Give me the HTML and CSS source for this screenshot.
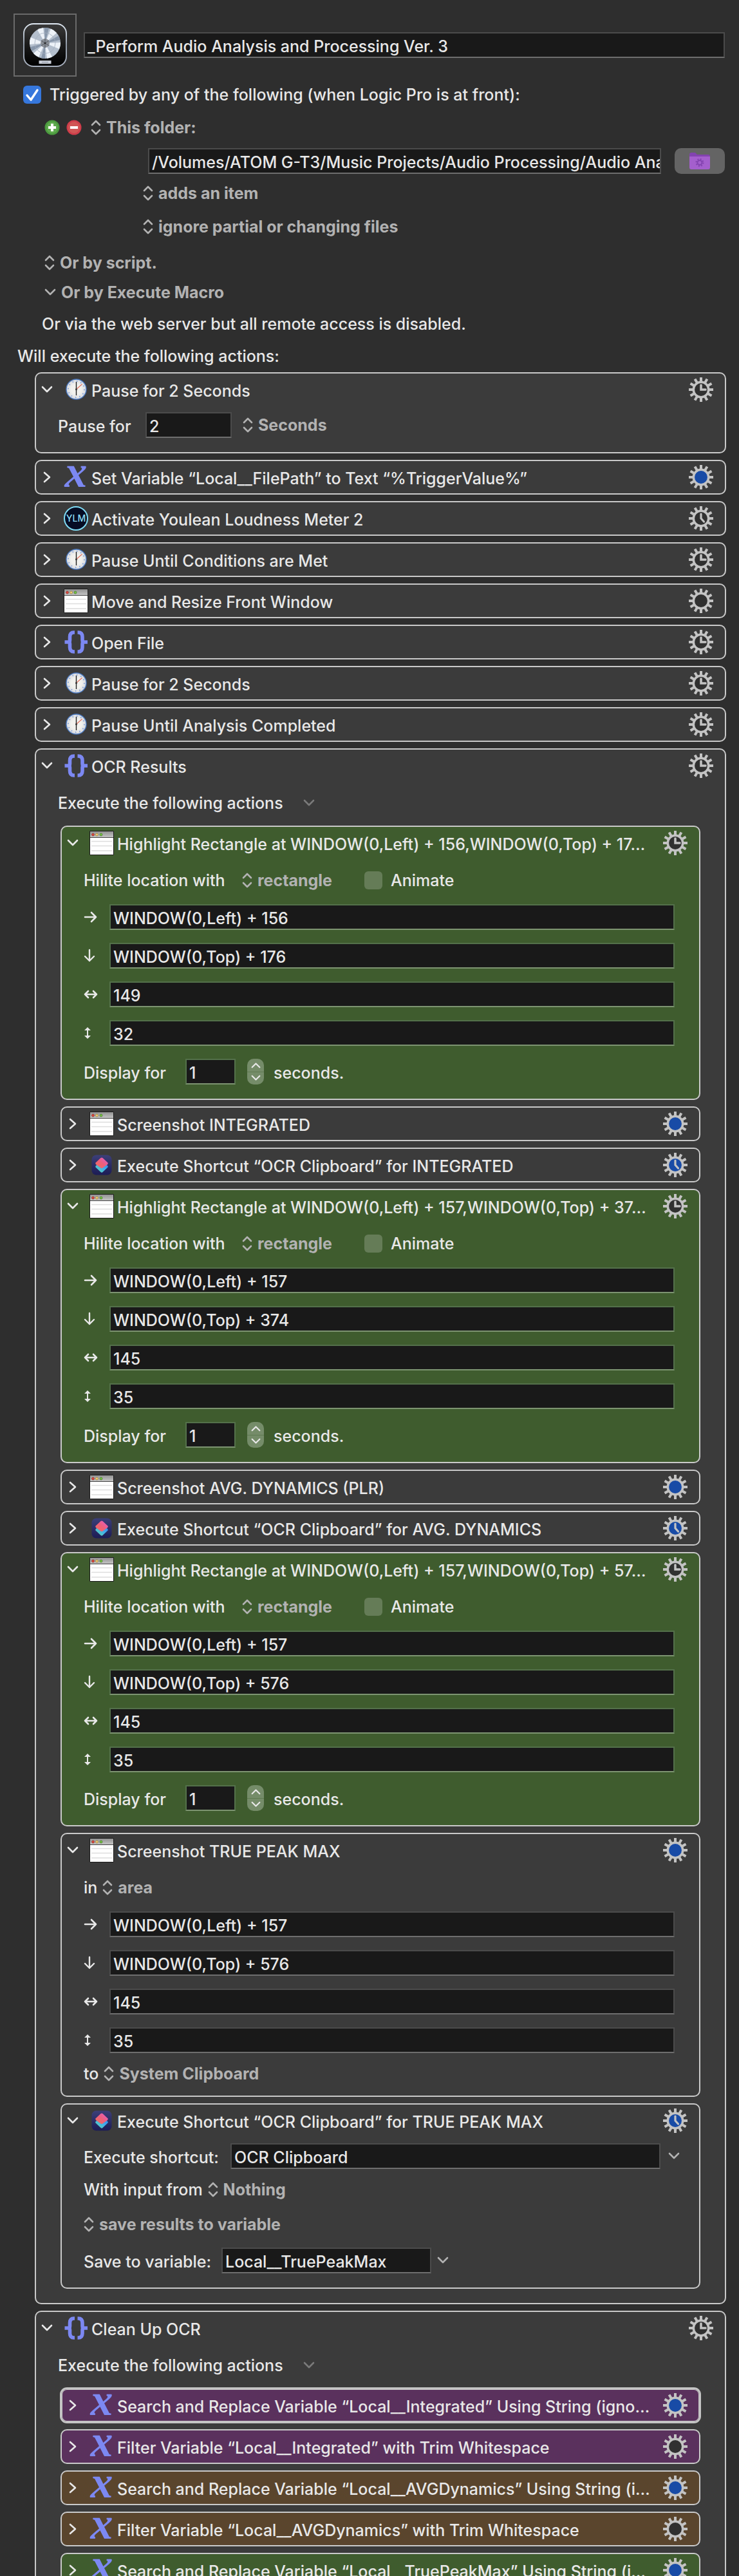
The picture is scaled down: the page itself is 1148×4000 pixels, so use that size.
FILE: index.html
```html
<!DOCTYPE html>
<html lang="en">
  <head>
    <meta charset="UTF-8" />
    <meta name="viewport" content="width=device-width, initial-scale=1.0" />
    <title>_Perform Audio Analysis and Processing Ver. 3</title>
    <link rel="stylesheet" href="styles.css">
  </head>
  <body>
    <!-- icons -->
    <svg class="sprite" aria-hidden="true">
      <defs>
        <linearGradient id="g-case" x1="0" y1="0" x2="0" y2="1">
          <stop offset="0" stop-color="#3a3a3a" />
          <stop offset="0.6" stop-color="#141414" />
          <stop offset="1" stop-color="#000" />
        </linearGradient>
        <linearGradient id="g-rim" x1="0" y1="0" x2="0" y2="1">
          <stop offset="0" stop-color="#dfe8f2" />
          <stop offset="0.5" stop-color="#8f99a6" />
          <stop offset="1" stop-color="#a9b1bf" />
        </linearGradient>
        <linearGradient id="g-bar" x1="0" y1="0" x2="0" y2="1">
          <stop offset="0" stop-color="#929292" />
          <stop offset="1" stop-color="#c4c4c4" />
        </linearGradient>
        <linearGradient id="g-short" x1="0" y1="0" x2="0" y2="1">
          <stop offset="0" stop-color="#3c3f78" />
          <stop offset="1" stop-color="#1c1c55" />
        </linearGradient>
        <linearGradient id="g-pink" x1="1" y1="0" x2="0" y2="1">
          <stop offset="0" stop-color="#e05fd0" />
          <stop offset="0.5" stop-color="#ee5f7c" />
          <stop offset="1" stop-color="#f0705a" />
        </linearGradient>
        <linearGradient id="g-blue" x1="1" y1="0" x2="0" y2="1">
          <stop offset="0" stop-color="#2f7df0" />
          <stop offset="0.5" stop-color="#45b0e8" />
          <stop offset="1" stop-color="#62dfa6" />
        </linearGradient>
        <radialGradient id="g-face">
          <stop offset="0.5" stop-color="#f2f2ee" />
          <stop offset="1" stop-color="#d8dade" />
        </radialGradient>
      </defs>

      <symbol id="i-right" viewBox="0 0 12 18">
        <path d="M2 2l8 7-8 7" fill="none" stroke="currentColor" stroke-width="2.6" stroke-linecap="round" stroke-linejoin="round" />
      </symbol>
      <symbol id="i-down" viewBox="0 0 18 12">
        <path d="M2 2l7 7 7-7" fill="none" stroke="currentColor" stroke-width="2.6" stroke-linecap="round" stroke-linejoin="round" />
      </symbol>
      <symbol id="i-updown" viewBox="0 0 16 24">
        <path d="M2 8l6-6 6 6M2 16l6 6 6-6" fill="none" stroke="currentColor" stroke-width="2.6" stroke-linecap="round" stroke-linejoin="round" />
      </symbol>

      <symbol id="i-clock" viewBox="0 0 38 38">
        <circle cx="19.500" cy="18.500" r="15.500" fill="url(#g-face)" stroke="#4d7cc4" stroke-width="1.4" />
        <circle cx="19.500" cy="18.500" r="12.500" fill="none" stroke="#7f9fdc" stroke-width="1.800" stroke-dasharray="1.600 4.945" />
        <path d="M19.500 18V7M19.500 19v9" stroke="#222" stroke-width="1.4" />
        <path d="M19.500 18.500l9-8" stroke="#e2705f" stroke-width="1.2" />
        <circle cx="19.500" cy="18.500" r="1.500" fill="#333" />
      </symbol>
      <symbol id="i-window" viewBox="0 0 38 38">
        <path d="M0.500 0.500h37v37h-37z" fill="#fff" stroke="#1a1a1a" />
        <path d="M1 1h36v9H1z" fill="url(#g-bar)" />
        <path d="M1 10.500h36" stroke="#444" />
        <path d="M3 16.500h32M3 23.500h32M3 31h32" stroke="#ddd" stroke-width="1.500" />
        <circle cx="5.500" cy="6" r="2" fill="#e0463c" stroke="#8a3a34" stroke-width="0.800" />
        <circle cx="11.500" cy="6" r="2" fill="#f5d076" stroke="#96803e" stroke-width="0.800" />
        <circle cx="18" cy="6" r="2" fill="#75c742" stroke="#4b7a30" stroke-width="0.800" />
      </symbol>
      <symbol id="i-group" viewBox="0 0 38 38">
        <path d="M17 4h-1q-6.500 0-6.500 7v5q0 3-3 3H1.500h5q3 0 3 3v5q0 7 6.500 7h1M21.500 4h1q6.500 0 6.500 7v5q0 3 3 3H37h-5q-3 0-3 3v5q0 7-6.500 7h-1" fill="none" stroke="#7c88f2" stroke-width="5.600" />
      </symbol>
      <symbol id="i-shortcut" viewBox="0 0 38 38">
        <rect x="3.500" y="3.500" width="31" height="31" rx="7" fill="url(#g-short)" />
        <path d="M9.500 22.500q-1-1.500 1-3l7-4.500q1.500-1 3 0l7 4.500q2 1.500 1 3l-8 7.500q-1.500 1.500-3 0z" fill="url(#g-blue)" />
        <path d="M9.500 15.500l8-7.500q1.500-1.200 3 0l8 7.500q1 1.500-1 3l-7 5q-1.500 1-3 0l-7-5q-2-1.500-1-3z" fill="url(#g-pink)" />
      </symbol>

      <symbol id="i-teeth" viewBox="0 0 38 38">
        <g stroke="#c3c3c3" stroke-width="4">
          <path d="M19 0v9M19 29v9M0 19h9M29 19h9" />
          <path d="M19 0v9M19 29v9M0 19h9M29 19h9" transform="rotate(30 19 19)" />
          <path d="M19 0v9M19 29v9M0 19h9M29 19h9" transform="rotate(60 19 19)" />
        </g>
      </symbol>
      <symbol id="i-gear" viewBox="0 0 38 38">
        <use href="#i-teeth" />
        <circle cx="19" cy="19" r="11.700" fill="#303030" stroke="#c3c3c3" stroke-width="3.500" />
      </symbol>
      <symbol id="i-gear-blue" viewBox="0 0 38 38">
        <use href="#i-teeth" />
        <circle cx="19" cy="19" r="11.700" fill="#184ba6" stroke="#c3c3c3" stroke-width="3.500" />
      </symbol>
      <symbol id="i-gear-clock" viewBox="0 0 38 38">
        <use href="#i-gear" />
        <path d="M19 12v7h7" fill="none" stroke="#c3c3c3" stroke-width="3.500" stroke-linecap="round" />
      </symbol>
      <symbol id="i-gear-timeout" viewBox="0 0 38 38">
        <use href="#i-gear" />
        <path d="M19 12v7l4.500 5" fill="none" stroke="#c3c3c3" stroke-width="3.200" stroke-linecap="round" />
      </symbol>
      <symbol id="i-gear-blue-timeout" viewBox="0 0 38 38">
        <use href="#i-gear-blue" />
        <path d="M19 12v7l4.500 5" fill="none" stroke="#c3c3c3" stroke-width="3.200" stroke-linecap="round" />
      </symbol>

      <symbol id="i-x" viewBox="0 0 22 22">
        <path d="M2 11h17M12 4l7 7-7 7" fill="none" stroke="currentColor" stroke-width="2.600" stroke-linecap="round" stroke-linejoin="round" />
      </symbol>
      <symbol id="i-y" viewBox="0 0 22 22">
        <path d="M9 2v17M2 12l7 7 7-7" fill="none" stroke="currentColor" stroke-width="2.400" stroke-linecap="round" stroke-linejoin="round" />
      </symbol>
      <symbol id="i-w" viewBox="0 0 22 22">
        <path d="M2 11h18M7 6l-5 5 5 5M15 6l5 5-5 5" fill="none" stroke="currentColor" stroke-width="2.600" stroke-linecap="round" stroke-linejoin="round" />
      </symbol>
      <symbol id="i-h" viewBox="0 0 22 22">
        <path d="M6 4v14" stroke="currentColor" stroke-width="2" />
        <path d="M1 7l5-5 5 5zM1 15l5 5 5-5z" fill="currentColor" />
      </symbol>
    </svg>

    <main class="page">
      <header class="top">
        <button class="macro-icon" aria-label="Macro icon">
          <svg width="68" height="68" viewBox="0 0 68 68">
            <rect x="1" y="1" width="66" height="66" rx="15" fill="url(#g-case)" stroke="url(#g-rim)" stroke-width="2" />
            <circle cx="34" cy="31" r="24" fill="#b4bfcd" />
            <g fill="#edf2f8">
              <path d="M34 31L22 10.200A24 24 0 0 1 31 7.200z" />
              <path d="M34 31L43 8.800A24 24 0 0 1 52 15z" />
              <path d="M34 31L58 30A24 24 0 0 1 56 40z" />
              <path d="M34 31L45 52.300A24 24 0 0 1 37 54.800z" />
              <path d="M34 31L24 52.800A24 24 0 0 1 16 47z" />
              <path d="M34 31L10 33A24 24 0 0 1 11.500 22z" />
            </g>
            <g fill="#8796aa">
              <path d="M34 31L33 7A24 24 0 0 1 40 7.800z" />
              <path d="M34 31L55 19.500A24 24 0 0 1 57.500 26z" />
              <path d="M34 31L34 55A24 24 0 0 1 28 54.200z" />
              <path d="M34 31L13.500 43.500A24 24 0 0 1 11 37z" />
            </g>
            <circle cx="34" cy="31" r="16" fill="none" stroke="#a3afbf" stroke-width="0.800" />
            <circle cx="34" cy="31" r="7" fill="#8a8f96" />
            <path d="M28 27l12 8M40 27l-12 8M34 24v14" stroke="#555b63" />
            <circle cx="34" cy="31" r="1.300" fill="#222" />
            <rect x="24.500" y="58" width="19" height="5" fill="#c9ced8" />
            <path d="M29 60.500h10" stroke="#8b919e" />
          </svg>
        </button>
        <input class="field grow" type="text" aria-label="Macro name" value="_Perform Audio Analysis and Processing Ver. 3">
      </header>

      <section class="triggers">
        <label class="line enable"><input class="check" type="checkbox" checked> Triggered by any of the following (when Logic Pro is at front):</label>

        <div class="line folder">
          <button class="round" aria-label="Add trigger">
            <svg width="24" height="24" viewBox="0 0 24 24"><circle cx="12" cy="12" r="11.500" fill="#4b9a3e" /><circle cx="12" cy="12" r="9" fill="#5fa94e" /><path d="M12 6v12M6 12h12" stroke="#fff" stroke-width="4" /></svg>
          </button>
          <button class="round" aria-label="Remove trigger">
            <svg width="24" height="24" viewBox="0 0 24 24"><circle cx="12" cy="12" r="11.500" fill="#cf3d4a" /><circle cx="12" cy="12" r="9" fill="#d05655" /><path d="M6 12h12" stroke="#fff" stroke-width="4" /></svg>
          </button>
          <label class="popup"><svg class="updown"><use href="#i-updown" /></svg><select aria-label="Trigger type"><option>This folder:</option></select></label>
        </div>

        <div class="path">
          <input class="field grow" type="text" aria-label="Folder path" value="/Volumes/ATOM G-T3/Music Projects/Audio Processing/Audio Analysis">
          <button class="choose" aria-label="Choose folder">
            <svg width="34" height="30" viewBox="0 0 34 30">
              <path d="M1 5q0-3 3-3h6l3 3h17q3 0 3 3v5H1z" fill="#8343b0" />
              <path d="M1 8h32v17q0 3-3 3H4q-3 0-3-3z" fill="#a45fcd" />
              <g fill="none" stroke="#8343b0"><circle cx="17" cy="17.500" r="3.500" stroke-width="2" /><circle cx="17" cy="17.500" r="5.500" stroke-width="2" stroke-dasharray="2 2.320" /></g>
            </svg>
          </button>
        </div>

        <label class="popup adds"><svg class="updown"><use href="#i-updown" /></svg><select aria-label="Folder event"><option>adds an item</option></select></label>
        <label class="popup ignore"><svg class="updown"><use href="#i-updown" /></svg><select aria-label="Partial files"><option>ignore partial or changing files</option></select></label>
        <label class="popup script"><svg class="updown"><use href="#i-updown" /></svg><select aria-label="Script trigger"><option>Or by script.</option></select></label>
        <label class="popup execute"><svg class="down"><use href="#i-down" /></svg><select aria-label="Execute Macro trigger"><option>Or by Execute Macro</option></select></label>
        <p class="web">Or via the web server but all remote access is disabled.</p>
      </section>

      <p class="will">Will execute the following actions:</p>

      <div class="actions main-actions">
        <section class="card">
          <header class="head">
            <button class="toggle" aria-label="Collapse"><svg class="down"><use href="#i-down" /></svg></button>
            <svg class="icon"><use href="#i-clock" /></svg>
            <h2>Pause for 2 Seconds</h2>
            <button class="gear" aria-label="Action options"><svg class="icon"><use href="#i-gear-clock" /></svg></button>
          </header>
          <div class="body">
            <div class="row">
              <label class="name pause-label" for="pause">Pause for</label>
              <input class="field pause" id="pause" type="text" value="2">
              <label class="popup"><svg class="updown"><use href="#i-updown" /></svg><select aria-label="Pause unit"><option>Seconds</option></select></label>
            </div>
          </div>
        </section>

        <section class="card">
          <header class="head">
            <button class="toggle" aria-label="Expand"><svg class="right"><use href="#i-right" /></svg></button>
            <span class="icon var" aria-hidden="true">x</span>
            <h2>Set Variable “Local__FilePath” to Text “%TriggerValue%”</h2>
            <button class="gear" aria-label="Action options"><svg class="icon"><use href="#i-gear-blue" /></svg></button>
          </header>
        </section>

        <section class="card">
          <header class="head">
            <button class="toggle" aria-label="Expand"><svg class="right"><use href="#i-right" /></svg></button>
            <span class="icon ylm">YLM</span>
            <h2>Activate Youlean Loudness Meter 2</h2>
            <button class="gear" aria-label="Action options"><svg class="icon"><use href="#i-gear-timeout" /></svg></button>
          </header>
        </section>

        <section class="card">
          <header class="head">
            <button class="toggle" aria-label="Expand"><svg class="right"><use href="#i-right" /></svg></button>
            <svg class="icon"><use href="#i-clock" /></svg>
            <h2>Pause Until Conditions are Met</h2>
            <button class="gear" aria-label="Action options"><svg class="icon"><use href="#i-gear-clock" /></svg></button>
          </header>
        </section>

        <section class="card">
          <header class="head">
            <button class="toggle" aria-label="Expand"><svg class="right"><use href="#i-right" /></svg></button>
            <svg class="icon"><use href="#i-window" /></svg>
            <h2>Move and Resize Front Window</h2>
            <button class="gear" aria-label="Action options"><svg class="icon"><use href="#i-gear" /></svg></button>
          </header>
        </section>

        <section class="card">
          <header class="head">
            <button class="toggle" aria-label="Expand"><svg class="right"><use href="#i-right" /></svg></button>
            <svg class="icon"><use href="#i-group" /></svg>
            <h2>Open File</h2>
            <button class="gear" aria-label="Action options"><svg class="icon"><use href="#i-gear-clock" /></svg></button>
          </header>
        </section>

        <section class="card">
          <header class="head">
            <button class="toggle" aria-label="Expand"><svg class="right"><use href="#i-right" /></svg></button>
            <svg class="icon"><use href="#i-clock" /></svg>
            <h2>Pause for 2 Seconds</h2>
            <button class="gear" aria-label="Action options"><svg class="icon"><use href="#i-gear-clock" /></svg></button>
          </header>
        </section>

        <section class="card">
          <header class="head">
            <button class="toggle" aria-label="Expand"><svg class="right"><use href="#i-right" /></svg></button>
            <svg class="icon"><use href="#i-clock" /></svg>
            <h2>Pause Until Analysis Completed</h2>
            <button class="gear" aria-label="Action options"><svg class="icon"><use href="#i-gear-clock" /></svg></button>
          </header>
        </section>

        <!-- OCR Results -->
        <section class="card">
          <header class="head">
            <button class="toggle" aria-label="Collapse"><svg class="down"><use href="#i-down" /></svg></button>
            <svg class="icon"><use href="#i-group" /></svg>
            <h2>OCR Results</h2>
            <button class="gear" aria-label="Action options"><svg class="icon"><use href="#i-gear-clock" /></svg></button>
          </header>
          <div class="body">
            <div class="row text-row group-row">Execute the following actions <button class="more" aria-label="Group options"><svg class="down"><use href="#i-down" /></svg></button></div>

            <div class="actions nested">
              <section class="card green">
                <header class="head">
                  <button class="toggle" aria-label="Collapse"><svg class="down"><use href="#i-down" /></svg></button>
                  <svg class="icon"><use href="#i-window" /></svg>
                  <h2>Highlight Rectangle at WINDOW(0,Left) + 156,WINDOW(0,Top) + 17…</h2>
                  <button class="gear" aria-label="Action options"><svg class="icon"><use href="#i-gear-clock" /></svg></button>
                </header>
                <div class="body">
                  <div class="row text-row">
                    <span class="hilite">Hilite location with</span>
                    <label class="popup shape"><svg class="updown"><use href="#i-updown" /></svg><select aria-label="Hilite shape"><option>rectangle</option></select></label>
                    <label class="animate"><input class="check" type="checkbox"> Animate</label>
                  </div>
                  <label class="row coord"><svg class="arrow"><use href="#i-x" /></svg><input class="field grow" type="text" aria-label="Left" value="WINDOW(0,Left) + 156"></label>
                  <label class="row coord"><svg class="arrow"><use href="#i-y" /></svg><input class="field grow" type="text" aria-label="Top" value="WINDOW(0,Top) + 176"></label>
                  <label class="row coord"><svg class="arrow"><use href="#i-w" /></svg><input class="field grow" type="text" aria-label="Width" value="149"></label>
                  <label class="row coord"><svg class="arrow"><use href="#i-h" /></svg><input class="field grow" type="text" aria-label="Height" value="32"></label>
                  <div class="row">
                    <label class="name display-label" for="display-1">Display for</label>
                    <input class="field display" id="display-1" type="text" value="1">
                    <span class="stepper"><button aria-label="More"><svg class="step up"><use href="#i-down" /></svg></button><button aria-label="Less"><svg class="step"><use href="#i-down" /></svg></button></span>
                    <span class="name">seconds.</span>
                  </div>
                </div>
              </section>

              <section class="card">
                <header class="head">
                  <button class="toggle" aria-label="Expand"><svg class="right"><use href="#i-right" /></svg></button>
                  <svg class="icon"><use href="#i-window" /></svg>
                  <h2>Screenshot INTEGRATED</h2>
                  <button class="gear" aria-label="Action options"><svg class="icon"><use href="#i-gear-blue" /></svg></button>
                </header>
              </section>

              <section class="card">
                <header class="head">
                  <button class="toggle" aria-label="Expand"><svg class="right"><use href="#i-right" /></svg></button>
                  <svg class="icon"><use href="#i-shortcut" /></svg>
                  <h2>Execute Shortcut “OCR Clipboard” for INTEGRATED</h2>
                  <button class="gear" aria-label="Action options"><svg class="icon"><use href="#i-gear-blue-timeout" /></svg></button>
                </header>
              </section>

              <section class="card green">
                <header class="head">
                  <button class="toggle" aria-label="Collapse"><svg class="down"><use href="#i-down" /></svg></button>
                  <svg class="icon"><use href="#i-window" /></svg>
                  <h2>Highlight Rectangle at WINDOW(0,Left) + 157,WINDOW(0,Top) + 37…</h2>
                  <button class="gear" aria-label="Action options"><svg class="icon"><use href="#i-gear-clock" /></svg></button>
                </header>
                <div class="body">
                  <div class="row text-row">
                    <span class="hilite">Hilite location with</span>
                    <label class="popup shape"><svg class="updown"><use href="#i-updown" /></svg><select aria-label="Hilite shape"><option>rectangle</option></select></label>
                    <label class="animate"><input class="check" type="checkbox"> Animate</label>
                  </div>
                  <label class="row coord"><svg class="arrow"><use href="#i-x" /></svg><input class="field grow" type="text" aria-label="Left" value="WINDOW(0,Left) + 157"></label>
                  <label class="row coord"><svg class="arrow"><use href="#i-y" /></svg><input class="field grow" type="text" aria-label="Top" value="WINDOW(0,Top) + 374"></label>
                  <label class="row coord"><svg class="arrow"><use href="#i-w" /></svg><input class="field grow" type="text" aria-label="Width" value="145"></label>
                  <label class="row coord"><svg class="arrow"><use href="#i-h" /></svg><input class="field grow" type="text" aria-label="Height" value="35"></label>
                  <div class="row">
                    <label class="name display-label" for="display-2">Display for</label>
                    <input class="field display" id="display-2" type="text" value="1">
                    <span class="stepper"><button aria-label="More"><svg class="step up"><use href="#i-down" /></svg></button><button aria-label="Less"><svg class="step"><use href="#i-down" /></svg></button></span>
                    <span class="name">seconds.</span>
                  </div>
                </div>
              </section>

              <section class="card">
                <header class="head">
                  <button class="toggle" aria-label="Expand"><svg class="right"><use href="#i-right" /></svg></button>
                  <svg class="icon"><use href="#i-window" /></svg>
                  <h2>Screenshot AVG. DYNAMICS (PLR)</h2>
                  <button class="gear" aria-label="Action options"><svg class="icon"><use href="#i-gear-blue" /></svg></button>
                </header>
              </section>

              <section class="card">
                <header class="head">
                  <button class="toggle" aria-label="Expand"><svg class="right"><use href="#i-right" /></svg></button>
                  <svg class="icon"><use href="#i-shortcut" /></svg>
                  <h2>Execute Shortcut “OCR Clipboard” for AVG. DYNAMICS</h2>
                  <button class="gear" aria-label="Action options"><svg class="icon"><use href="#i-gear-blue-timeout" /></svg></button>
                </header>
              </section>

              <section class="card green">
                <header class="head">
                  <button class="toggle" aria-label="Collapse"><svg class="down"><use href="#i-down" /></svg></button>
                  <svg class="icon"><use href="#i-window" /></svg>
                  <h2>Highlight Rectangle at WINDOW(0,Left) + 157,WINDOW(0,Top) + 57…</h2>
                  <button class="gear" aria-label="Action options"><svg class="icon"><use href="#i-gear-clock" /></svg></button>
                </header>
                <div class="body">
                  <div class="row text-row">
                    <span class="hilite">Hilite location with</span>
                    <label class="popup shape"><svg class="updown"><use href="#i-updown" /></svg><select aria-label="Hilite shape"><option>rectangle</option></select></label>
                    <label class="animate"><input class="check" type="checkbox"> Animate</label>
                  </div>
                  <label class="row coord"><svg class="arrow"><use href="#i-x" /></svg><input class="field grow" type="text" aria-label="Left" value="WINDOW(0,Left) + 157"></label>
                  <label class="row coord"><svg class="arrow"><use href="#i-y" /></svg><input class="field grow" type="text" aria-label="Top" value="WINDOW(0,Top) + 576"></label>
                  <label class="row coord"><svg class="arrow"><use href="#i-w" /></svg><input class="field grow" type="text" aria-label="Width" value="145"></label>
                  <label class="row coord"><svg class="arrow"><use href="#i-h" /></svg><input class="field grow" type="text" aria-label="Height" value="35"></label>
                  <div class="row">
                    <label class="name display-label" for="display-3">Display for</label>
                    <input class="field display" id="display-3" type="text" value="1">
                    <span class="stepper"><button aria-label="More"><svg class="step up"><use href="#i-down" /></svg></button><button aria-label="Less"><svg class="step"><use href="#i-down" /></svg></button></span>
                    <span class="name">seconds.</span>
                  </div>
                </div>
              </section>

              <section class="card">
                <header class="head">
                  <button class="toggle" aria-label="Collapse"><svg class="down"><use href="#i-down" /></svg></button>
                  <svg class="icon"><use href="#i-window" /></svg>
                  <h2>Screenshot TRUE PEAK MAX</h2>
                  <button class="gear" aria-label="Action options"><svg class="icon"><use href="#i-gear-blue" /></svg></button>
                </header>
                <div class="body">
                  <div class="row text-row inline">
                    in <label class="popup"><svg class="updown"><use href="#i-updown" /></svg><select aria-label="Screenshot source"><option>area</option></select></label>
                  </div>
                  <label class="row coord"><svg class="arrow"><use href="#i-x" /></svg><input class="field grow" type="text" aria-label="Left" value="WINDOW(0,Left) + 157"></label>
                  <label class="row coord"><svg class="arrow"><use href="#i-y" /></svg><input class="field grow" type="text" aria-label="Top" value="WINDOW(0,Top) + 576"></label>
                  <label class="row coord"><svg class="arrow"><use href="#i-w" /></svg><input class="field grow" type="text" aria-label="Width" value="145"></label>
                  <label class="row coord"><svg class="arrow"><use href="#i-h" /></svg><input class="field grow" type="text" aria-label="Height" value="35"></label>
                  <div class="row short-row inline">
                    to <label class="popup"><svg class="updown"><use href="#i-updown" /></svg><select aria-label="Screenshot destination"><option>System Clipboard</option></select></label>
                  </div>
                </div>
              </section>

              <section class="card">
                <header class="head">
                  <button class="toggle" aria-label="Collapse"><svg class="down"><use href="#i-down" /></svg></button>
                  <svg class="icon"><use href="#i-shortcut" /></svg>
                  <h2>Execute Shortcut “OCR Clipboard” for TRUE PEAK MAX</h2>
                  <button class="gear" aria-label="Action options"><svg class="icon"><use href="#i-gear-blue-timeout" /></svg></button>
                </header>
                <div class="body shortcut">
                  <div class="row wide">
                    <label class="name shortcut-label" for="shortcut">Execute shortcut:</label>
                    <input class="field grow" id="shortcut" type="text" value="OCR Clipboard">
                    <button class="pick" aria-label="Choose shortcut"><svg class="down"><use href="#i-down" /></svg></button>
                  </div>
                  <div class="row short-row inline">
                    With input from <label class="popup"><svg class="updown"><use href="#i-updown" /></svg><select aria-label="Shortcut input"><option>Nothing</option></select></label>
                  </div>
                  <div class="row short-row inline results">
                    <label class="popup"><svg class="updown"><use href="#i-updown" /></svg><select aria-label="Result handling"><option>save results to variable</option></select></label>
                  </div>
                  <div class="row">
                    <label class="name save-label" for="save">Save to variable:</label>
                    <input class="field save" id="save" type="text" value="Local__TruePeakMax">
                    <button class="pick" aria-label="Choose variable"><svg class="down"><use href="#i-down" /></svg></button>
                  </div>
                </div>
              </section>
            </div>
          </div>
        </section>

        <!-- Clean Up OCR -->
        <section class="card">
          <header class="head">
            <button class="toggle" aria-label="Collapse"><svg class="down"><use href="#i-down" /></svg></button>
            <svg class="icon"><use href="#i-group" /></svg>
            <h2>Clean Up OCR</h2>
            <button class="gear" aria-label="Action options"><svg class="icon"><use href="#i-gear-clock" /></svg></button>
          </header>
          <div class="body">
            <div class="row text-row group-row">Execute the following actions <button class="more" aria-label="Group options"><svg class="down"><use href="#i-down" /></svg></button></div>

            <div class="actions nested">
              <section class="card purple selected">
                <header class="head">
                  <button class="toggle" aria-label="Expand"><svg class="right"><use href="#i-right" /></svg></button>
                  <span class="icon var" aria-hidden="true">x</span>
                  <h2>Search and Replace Variable “Local__Integrated” Using String (igno…</h2>
                  <button class="gear" aria-label="Action options"><svg class="icon"><use href="#i-gear-blue" /></svg></button>
                </header>
              </section>
              <section class="card purple">
                <header class="head">
                  <button class="toggle" aria-label="Expand"><svg class="right"><use href="#i-right" /></svg></button>
                  <span class="icon var" aria-hidden="true">x</span>
                  <h2>Filter Variable “Local__Integrated” with Trim Whitespace</h2>
                  <button class="gear" aria-label="Action options"><svg class="icon"><use href="#i-gear" /></svg></button>
                </header>
              </section>
              <section class="card brown">
                <header class="head">
                  <button class="toggle" aria-label="Expand"><svg class="right"><use href="#i-right" /></svg></button>
                  <span class="icon var" aria-hidden="true">x</span>
                  <h2>Search and Replace Variable “Local__AVGDynamics” Using String (i…</h2>
                  <button class="gear" aria-label="Action options"><svg class="icon"><use href="#i-gear-blue" /></svg></button>
                </header>
              </section>
              <section class="card brown">
                <header class="head">
                  <button class="toggle" aria-label="Expand"><svg class="right"><use href="#i-right" /></svg></button>
                  <span class="icon var" aria-hidden="true">x</span>
                  <h2>Filter Variable “Local__AVGDynamics” with Trim Whitespace</h2>
                  <button class="gear" aria-label="Action options"><svg class="icon"><use href="#i-gear" /></svg></button>
                </header>
              </section>
              <section class="card green">
                <header class="head">
                  <button class="toggle" aria-label="Expand"><svg class="right"><use href="#i-right" /></svg></button>
                  <span class="icon var" aria-hidden="true">x</span>
                  <h2>Search and Replace Variable “Local__TruePeakMax” Using String (i…</h2>
                  <button class="gear" aria-label="Action options"><svg class="icon"><use href="#i-gear-blue" /></svg></button>
                </header>
              </section>
            </div>
          </div>
        </section>
      </div>
    </main>
  </body>
</html>
```
FILE: styles.css
```css
* {
  box-sizing: border-box;
  margin: 0;
  padding: 0;
}

body {
  background-color: #2e2e2e;
  color: #e8e8e8;
  font-family: Inter, "Liberation Sans", sans-serif;
  font-size: 25px;
  font-weight: 500;
  line-height: 30px;
}

button {
  border: 0;
  background: none;
  color: inherit;
  cursor: pointer;
}

svg {
  display: block;
  flex-shrink: 0;
}

.sprite {
  position: absolute;
  width: 0;
  height: 0;
}

.page {
  max-height: 100vh;
  overflow: hidden;
  padding: 21px 20px 0 21px;
}

/* shared controls */
.field {
  height: 40px;
  min-width: 0;
  padding: 4px 0 0 4px;
  border: 2px solid #4b4b4b;
  border-bottom-color: #6e6e6e;
  background-color: #191919;
  color: #e8e8e8;
  font: inherit;
}

.grow {
  flex: 1;
}

.check {
  appearance: none;
  flex-shrink: 0;
  width: 28px;
  height: 28px;
  border-radius: 6px;
  background-color: rgba(255, 255, 255, 0.2);
}

.check:checked {
  background: #3677dc url('data:image/svg+xml,<svg xmlns="http://www.w3.org/2000/svg" viewBox="0 0 28 28"><path d="M6 15l6 7L22 7" fill="none" stroke="white" stroke-width="3.4" stroke-linecap="round" stroke-linejoin="round"/></svg>');
}

.popup {
  display: flex;
  align-items: center;
  gap: 8px;
  height: 24px;
  color: #b2b2b2;
}

.popup select {
  appearance: none;
  border: 0;
  background: none;
  color: inherit;
  font: inherit;
  font-weight: 700;
}

.updown {
  width: 16px;
  height: 24px;
}

.down {
  width: 18px;
  height: 12px;
}

.right {
  width: 12px;
  height: 18px;
}

.icon {
  flex-shrink: 0;
  width: 38px;
  height: 38px;
}

.arrow {
  width: 22px;
  height: 22px;
}

.var {
  color: #7c88f2;
  font: italic bold 70px/22px "Liberation Serif", serif;
  text-align: center;
}

.ylm {
  border: 2px solid #7fdcf5;
  border-radius: 50%;
  background-color: #060d24;
  color: #8adcf0;
  font-size: 14px;
  line-height: 34px;
  text-align: center;
}

/* macro name */
.top {
  display: flex;
  align-items: center;
  gap: 11px;
  padding-right: 2px;
}

.macro-icon {
  display: flex;
  align-items: center;
  justify-content: center;
  width: 98px;
  height: 98px;
  border: 2px solid #6a6a6a;
}

/* triggers */
.line {
  display: flex;
  align-items: center;
}

.enable {
  gap: 13px;
  margin: 13px 0 0 15px;
}

.folder {
  gap: 10px;
  margin: 24px 0 0 48px;
}

.folder .popup {
  margin-left: 4px;
}

.path {
  display: flex;
  gap: 21px;
  margin: 20px 2px 0 209px;
}

.choose {
  display: flex;
  align-items: center;
  justify-content: center;
  width: 78px;
  height: 40px;
  border-radius: 10px;
  background-color: #646464;
}

.adds {
  margin: 18px 0 0 201px;
}

.ignore {
  margin: 28px 0 0 201px;
}

.script {
  margin: 32px 0 0 48px;
}

.execute {
  margin: 22px 0 0 48px;
}

.web {
  margin: 22px 0 0 44px;
}

.will {
  margin: 20px 0 0 6px;
}

/* action cards */
.actions {
  display: flex;
  flex-direction: column;
  gap: 10px;
}

.main-actions {
  margin: 10px 0 0 33px;
}

.card {
  border: 2px solid #c9c9c9;
  border-radius: 10px;
  background-color: #3b3b3b;
}

.green {
  background-color: #3f5c2e;
}

.purple {
  background-color: #5a315d;
}

.brown {
  background-color: #5a452d;
}

.selected {
  border-color: #c4c4c4;
  box-shadow: 0 0 0 1px #c4c4c4, inset 0 0 0 1px #c4c4c4;
}

.head {
  display: flex;
  align-items: center;
  height: 50px;
  padding-right: 18px;
}

.toggle {
  display: flex;
  align-items: center;
  justify-content: center;
  width: 34px;
  height: 34px;
  margin-right: 9px;
}

.head h2 {
  flex: 1;
  min-width: 0;
  padding: 4px 0 0 5px;
  font-size: 25px;
  font-weight: 500;
  white-space: nowrap;
}

.body {
  display: flex;
  flex-direction: column;
  gap: 20px;
  padding: 10px 38px 22px 34px;
}

.row {
  display: flex;
  align-items: center;
  height: 40px;
}

.text-row {
  padding-top: 6px;
}

.name {
  padding-top: 4px;
}

.group-row {
  gap: 31px;
}

.group-row + .nested {
  margin: -2px 0 0 4px;
}

.short-row {
  height: 24px;
}

.inline {
  gap: 8px;
}

.more {
  color: #7a7a7a;
}

.pause-label {
  width: 136px;
}

.pause {
  width: 134px;
  margin-right: 17px;
}

.hilite {
  width: 246px;
}

.shape {
  width: 190px;
}

.animate {
  display: flex;
  align-items: center;
  gap: 13px;
}

.coord {
  gap: 18px;
}

.green .field {
  border-color: #53704a;
  border-bottom-color: #7d9471;
}

.display-label {
  width: 158px;
}

.display {
  width: 78px;
}

.stepper {
  display: flex;
  flex-direction: column;
  width: 26px;
  height: 40px;
  margin: 0 15px 0 18px;
  overflow: hidden;
  border-radius: 10px;
  background-color: #758c69;
}

.stepper button {
  display: flex;
  flex: 1;
  align-items: center;
  justify-content: center;
}

.stepper button + button {
  border-top: 1px solid #5f7a51;
}

.step {
  width: 15px;
  height: 10px;
}

.up {
  transform: rotate(180deg);
}

.shortcut-label {
  width: 228px;
}

.save-label {
  width: 214px;
}

.save {
  width: 326px;
}

.pick {
  margin-left: 9px;
  color: #b2b2b2;
}

.wide .pick {
  margin-left: 12px;
  margin-right: -8px;
}

.results {
  margin: 10px 0 4px;
}
```
